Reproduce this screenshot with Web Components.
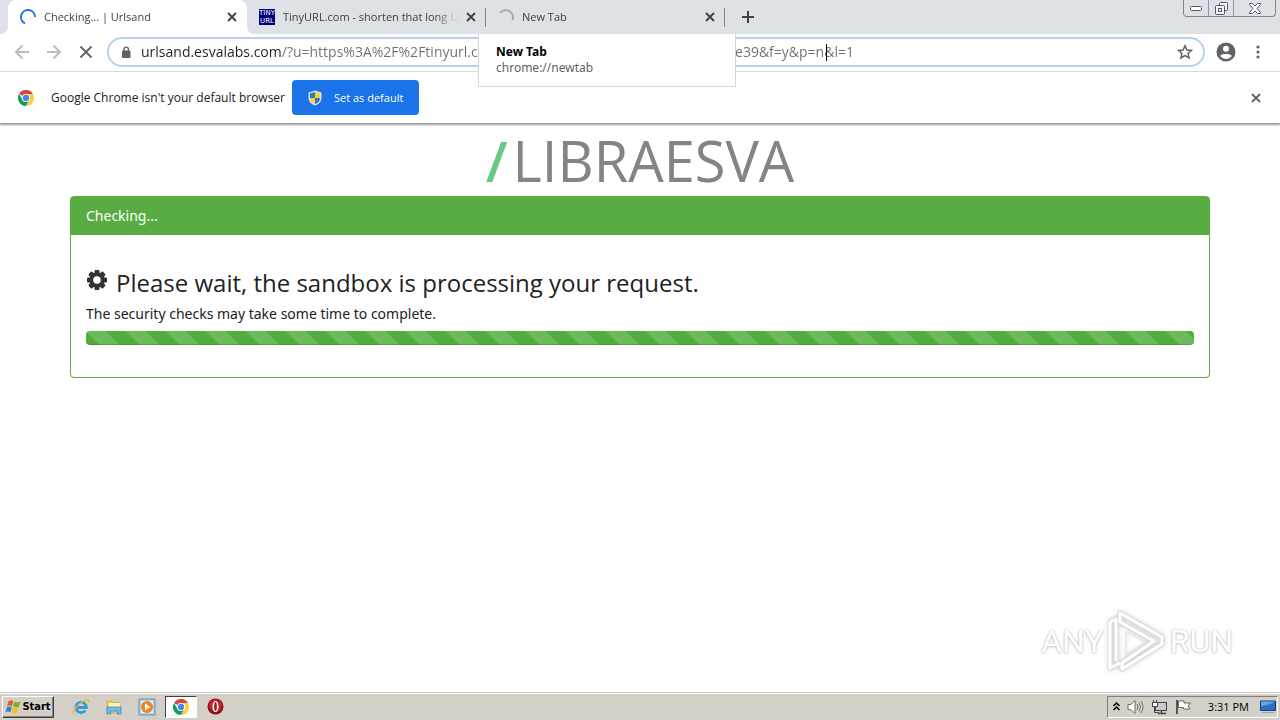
<!DOCTYPE html>
<html lang="en">
<head>
<meta charset="utf-8">
<title>Checking... | Urlsand</title>
<style>
html, body {
	height: 100%;
	margin: 0;
}
body {
	overflow: hidden;
	background: #fff;
}
</style>
</head>
<body>
<x-desktop></x-desktop>
<script>
const uiFont = '"Open Sans", "Noto Sans", sans-serif';
const icons = {
	spinner: '<svg width="16" height="16" viewBox="0 0 16 16"><path d="M5 14.300A7 7 0 1 1 15 8" fill="none" stroke="currentColor" stroke-width="2"/></svg>',
	arc: '<svg width="16" height="16" viewBox="0 0 16 16"><path d="M2.500 3.700A7 7 0 0 1 14.300 11" fill="none" stroke="currentColor" stroke-width="2"/></svg>',
	close: '<svg width="10" height="10" viewBox="0 0 10 10"><path d="M1 1L9 9M9 1L1 9" stroke="currentColor" stroke-width="1.800"/></svg>',
	stop: '<svg width="14" height="14" viewBox="0 0 14 14"><path d="M1.500 1.500L12.500 12.500M12.500 1.500L1.500 12.500" stroke="currentColor" stroke-width="1.800"/></svg>',
	plus: '<svg width="12" height="12" viewBox="0 0 12 12"><path d="M6 0V12M0 6H12" stroke="currentColor" stroke-width="2"/></svg>',
	back: '<svg width="16" height="16" viewBox="0 0 16 16"><path d="M15 8H2M8.500 1.500L2 8L8.500 14.500" fill="none" stroke="currentColor" stroke-width="2"/></svg>',
	forward: '<svg width="16" height="16" viewBox="0 0 16 16"><path d="M1 8H14M7.500 1.500L14 8L7.500 14.500" fill="none" stroke="currentColor" stroke-width="2"/></svg>',
	lock: '<svg width="10" height="12" viewBox="0 0 10 12"><rect x="1" y="4.500" width="8.500" height="7.500" rx="1" fill="#5f6368"/><path d="M3 5V3.300a2.200 2.200 0 0 1 4.400 0V5" fill="none" stroke="#5f6368" stroke-width="1.400"/></svg>',
	star: '<svg width="16" height="16" viewBox="0 0 16 16"><path d="M8 1.800L9.900 6L14.500 6.400L11 9.500L12.100 14L8 11.600L3.900 14L5 9.500L1.500 6.400L6.100 6Z" fill="none" stroke="#5f6368" stroke-width="1.500"/></svg>',
	person: '<svg width="20" height="20" viewBox="0 0 20 20"><circle cx="10" cy="10" r="9.500" fill="#5f6368"/><circle cx="10" cy="6.800" r="3" fill="#fff"/><path d="M4.200 14C5.500 11.400 14.500 11.400 15.800 14C14.300 16 12.200 16.900 10 16.900S5.700 16 4.200 14Z" fill="#fff"/></svg>',
	dots: '<svg width="4" height="14" viewBox="0 0 4 14"><g fill="#5f6368"><circle cx="2" cy="2" r="1.600"/><circle cx="2" cy="7" r="1.600"/><circle cx="2" cy="12" r="1.600"/></g></svg>',
	chrome: '<svg width="16" height="16" viewBox="0 0 48 48"><path d="M3.200 12A24 24 0 0 1 44.800 12H24A12 12 0 0 0 13.600 18Z" fill="#db4437"/><path d="M3.200 12L13.600 30A12 12 0 0 0 24 36L34.400 30L24 48A24 24 0 0 1 3.200 12Z" fill="#0f9d58"/><path d="M44.800 12A24 24 0 0 1 24 48L34.400 30A12 12 0 0 0 34.400 18L24 12Z" fill="#ffcd40"/><circle cx="24" cy="24" r="12" fill="#fff"/><circle cx="24" cy="24" r="9.500" fill="#4285f4"/></svg>',
	shield: '<svg width="14" height="16" viewBox="0 0 14 16"><path d="M7 .500L13.500 2.500V8C13.500 12 10 14.500 7 15.500C4 14.500 .500 12 .500 8V2.500Z" fill="#d8dfe8"/><path d="M7 2V8H2V3.500Z" fill="#2b78c5"/><path d="M7 2L12 3.500V8H7Z" fill="#fbd03b"/><path d="M2 8H7V14C4 12.800 2 11 2 8Z" fill="#fbd03b"/><path d="M12 8H7V14C10 12.800 12 11 12 8Z" fill="#2b78c5"/></svg>',
	gear: '<svg width="22" height="22" viewBox="0 0 22 22"><g fill="#333"><rect x="8.500" y="1" width="5" height="20" rx="1"/><rect x="1" y="8.500" width="20" height="5" rx="1"/><g transform="rotate(45 11 11)"><rect x="8.500" y="1" width="5" height="20" rx="1"/><rect x="1" y="8.500" width="20" height="5" rx="1"/></g><circle cx="11" cy="11" r="7.500"/></g><circle cx="11" cy="11" r="3.800" fill="#fff"/></svg>',
	minimize: '<svg width="12" height="5" viewBox="0 0 12 5"><rect x=".500" y=".500" width="11" height="4" rx="1" fill="#fff" stroke="#50586a"/></svg>',
	restore: '<svg width="13" height="13" viewBox="0 0 13 13"><g fill="#f4f5f7" stroke="#50586a"><rect x="4.500" y=".500" width="8" height="8" rx="1"/><rect x=".500" y="3.500" width="9" height="9" rx="1"/><rect x="3.500" y="6.500" width="3" height="3"/></g></svg>',
	winclose: '<svg width="12" height="11" viewBox="0 0 12 11"><path d="M.500 .500H3.500L6 3.200L8.500 .500H11.500V1.500L8 5.500L11.500 9.500V10.500H8.500L6 7.800L3.500 10.500H.500V9.500L4 5.500L.500 1.500Z" fill="#fff" stroke="#50586a"/></svg>',
	windows: '<svg width="17" height="16" viewBox="0 0 17 16"><path d="M3.500 2C5.500 .800 7 1 8.300 2L7 7.200C5.500 6.300 4 6.400 2.200 7.200Z" fill="#ea5b23"/><path d="M9.200 2.500C11 3.600 13 3.600 15.500 2.400L14 7.700C12 8.700 9.800 8.600 8 7.600Z" fill="#79b52b"/><path d="M2 8.100C4 7.200 5.500 7.300 6.800 8.200L5.400 13.300C4 12.400 2.500 12.400 .600 13.200Z" fill="#2f80d8"/><path d="M7.700 8.600C9.500 9.600 11.700 9.600 13.800 8.600L12.300 13.800C10 14.900 8 14.600 6.300 13.700Z" fill="#f8bd20"/></svg>',
	ie: '<svg width="18" height="18" viewBox="0 0 18 18"><path d="M4.500 9.500H14.300A5.200 5.200 0 1 0 13.300 12.500" fill="none" stroke="#2f9adb" stroke-width="2.800"/><path d="M1.500 16C.500 13.500 5 7 10 4S17.500 1.500 16.500 4.500" fill="none" stroke="#efb82d" stroke-width="1.400"/></svg>',
	folder: '<svg width="18" height="18" viewBox="0 0 18 18"><path d="M2 3H7L8.500 4.500H15V15H2Z" fill="#edcc68" stroke="#c6a54a" stroke-width=".800"/><rect x="4" y="5" width="11" height="5" fill="#fff3b2"/><path d="M2 9H16V16H12.500V13H5.500V16H2Z" fill="#71bce5" stroke="#3c8bbb" stroke-width=".800"/></svg>',
	player: '<svg width="18" height="18" viewBox="0 0 18 18"><rect x="1" y="1" width="16" height="16" fill="#acd0ef" stroke="#5e91c0"/><rect x="3" y="3" width="12" height="12" fill="#e5f2fb"/><circle cx="9" cy="9" r="6" fill="#ee8618"/><path d="M7 5.500L12.500 9L7 12.500Z" fill="#fff"/></svg>',
	opera: '<svg width="17" height="17" viewBox="0 0 17 17"><circle cx="8.500" cy="8.500" r="8" fill="#8b1117"/><circle cx="8.500" cy="7.500" r="6.500" fill="#c5232b"/><ellipse cx="8.500" cy="8.500" rx="3" ry="5.500" fill="#fff"/><ellipse cx="8.500" cy="8.500" rx="1.400" ry="4.500" fill="#a51c22"/></svg>',
	chevrons: '<svg width="7" height="9" viewBox="0 0 7 9"><path d="M.500 4L3.500 1L6.500 4M.500 8L3.500 5L6.500 8" fill="none" stroke="#000" stroke-width="1.500"/></svg>',
	sound: '<svg width="17" height="16" viewBox="0 0 17 16"><path d="M1 5.500H4L8 1.500V14.500L4 10.500H1Z" fill="#fff" stroke="#6d6d6d"/><path d="M10 5Q12 8 10 11M12 3.500Q15 8 12 12.500M14 2Q18 8 14 14" fill="none" stroke="#777"/></svg>',
	network: '<svg width="17" height="16" viewBox="0 0 17 16"><rect x="4.500" y="3.500" width="11" height="8" fill="#c8cac9" stroke="#444"/><path d="M7 14.500H15M10.500 12V14" stroke="#444" stroke-width="1.500"/><path d="M3.500 7.500V13.500H8M2.500 1V4M5.500 1V4" fill="none" stroke="#444"/><rect x="1.500" y="3.500" width="5" height="4" fill="#fff" stroke="#444"/></svg>',
	flag: '<svg width="17" height="16" viewBox="0 0 17 16"><path d="M2 1V15" stroke="#555" stroke-width="2"/><path d="M3.500 2H9V4H15.500L13 7L15 10H8.500V8.500H3.500Z" fill="#fff" stroke="#666"/></svg>',
	desktop: '<svg width="16" height="14" viewBox="0 0 16 14"><path d="M.500 1H15.500V10.500H.500Z" fill="#2e6fc1" stroke="#173e7c"/><path d="M1 6Q8 6 15 1.500H1Z" fill="#66a6e5"/><path d="M2 12.500H14" stroke="#8ba6c9"/></svg>',
	play: '<svg width="58" height="62" viewBox="0 0 58 62"><g fill="none" stroke-linejoin="round"><path d="M8 51V9L2 12V58L12 53M12 3L54 27V34L14 59V53L46 31L12 12Z" stroke="#dcdcdc" stroke-width="5"/><path d="M8 51V9L2 12V58L12 53M12 3L54 27V34L14 59V53L46 31L12 12Z" stroke="#fff" stroke-width="3"/><path d="M18 22V45L38 32Z" stroke="#e3e3e3" stroke-width="1"/></g></svg>',
};
const buttonReset = `
button {
	display: flex;
	align-items: center;
	justify-content: center;
	margin: 0;
	padding: 0;
	border: none;
	background: none;
	color: inherit;
	font: inherit;
}
svg {
	display: block;
}
`;

/**
 * Registers an element whose shadow root is cloned from the given markup.
 * @param {string} name
 * @param {string} html
 */
function define(name, html) {
	const template = document.createElement('template');
	template.innerHTML = html;
	customElements.define(name, class extends HTMLElement {
		constructor() {
			super();
			this.attachShadow({ mode: 'open' });
			this.shadowRoot.appendChild(template.content.cloneNode(true));
		}
	});
}

define('browser-tab', `
<style>
${buttonReset}
:host {
	position: relative;
	display: flex;
	align-items: center;
	flex: 0 1 239px;
	min-width: 0;
	box-sizing: border-box;
	gap: 8px;
	padding: 0 10px 0 12px;
	color: #3c4043;
}
:host([active]) {
	background: #fff;
	border-radius: 8px 8px 0 0;
}
:host([active])::before,
:host([active])::after {
	content: '';
	position: absolute;
	bottom: 0;
	width: 8px;
	height: 8px;
}
:host([active])::before {
	right: 100%;
	background: radial-gradient(circle at 0 0, transparent 8px, #fff 8px);
}
:host([active])::after {
	left: 100%;
	background: radial-gradient(circle at 100% 0, transparent 8px, #fff 8px);
}
:host([divided])::after {
	content: '';
	position: absolute;
	right: 0;
	top: 8px;
	width: 1px;
	height: 19px;
	background: #80868b;
}
.title {
	flex: 1;
	overflow: hidden;
	white-space: nowrap;
	-webkit-mask-image: linear-gradient(90deg, #000 calc(100% - 24px), transparent);
	mask-image: linear-gradient(90deg, #000 calc(100% - 24px), transparent);
}
</style>
<slot name="icon"></slot>
<span class="title"><slot></slot></span>
<button aria-label="Close tab">${icons.close}</button>
<slot name="card"></slot>
`);

define('hover-card', `
<style>
:host {
	position: absolute;
	top: 34px;
	left: -8px;
	z-index: 8;
	box-sizing: border-box;
	width: 258px;
	padding: 10px 17px;
	border: 1px solid #d5d7da;
	border-top: none;
	background: #fff;
	color: #5f6368;
	font: 12px/16px "Noto Sans", sans-serif;
}
b {
	display: block;
	color: #000;
}
</style>
<b><slot name="title"></slot></b>
<slot></slot>
`);

define('window-controls', `
<style>
${buttonReset}
:host {
	display: flex;
	align-self: flex-start;
	margin: 0 4px 0 auto;
	border: 1px solid #80868f;
	border-top: none;
	border-radius: 0 0 4px 4px;
}
button {
	width: 25px;
	height: 16px;
	border-right: 1px solid #9298a1;
}
button:last-child {
	width: 41px;
	border: none;
}
</style>
<button aria-label="Minimize">${icons.minimize}</button>
<button aria-label="Restore">${icons.restore}</button>
<button aria-label="Close">${icons.winclose}</button>
`);

define('tab-strip', `
<style>
${buttonReset}
:host {
	display: flex;
	height: 34px;
	padding-left: 8px;
	background: #dee1e6;
	font-size: 11px;
	line-height: 16px;
}
.blue {
	color: #2a6fdb;
}
.gray {
	color: #a5a8ac;
}
.tiny {
	width: 16px;
	background: #00007f;
	color: #fff;
	font: 7px/8px "DejaVu Sans", sans-serif;
	text-align: center;
}
.add {
	width: 46px;
	color: #3c4043;
}
</style>
<browser-tab active><span slot="icon" class="blue">${icons.spinner}</span>Checking... | Urlsand</browser-tab>
<browser-tab divided><span slot="icon" class="tiny">TINY URL</span>TinyURL.com - shorten that long URL</browser-tab>
<browser-tab divided>
	<span slot="icon" class="gray">${icons.arc}</span>New Tab
	<hover-card slot="card"><span slot="title">New Tab</span>chrome://newtab</hover-card>
</browser-tab>
<button class="add" aria-label="New tab">${icons.plus}</button>
<window-controls></window-controls>
`);

define('address-bar', `
<style>
${buttonReset}
:host {
	position: relative;
	display: flex;
	align-items: center;
	flex: 1;
	box-sizing: border-box;
	height: 30px;
	padding: 0 10px 0 12px;
	border: 2px solid #b9cfee;
	border-radius: 15px;
	--host-width: 140px;
}
input {
	flex: 1;
	min-width: 0;
	margin: 0 10px;
	padding: 0;
	border: none;
	outline: none;
	font: 14px/20px "Open Sans", sans-serif;
	color: transparent;
	background: linear-gradient(90deg, #202124 var(--host-width), #6b6f74 var(--host-width));
	-webkit-background-clip: text;
	background-clip: text;
}
.caret {
	position: absolute;
	left: 717px;
	width: 1px;
	height: 17px;
	background: #000;
}
</style>
${icons.lock}
<input aria-label="Address" spellcheck="false" value="urlsand.esvalabs.com/?u=https%3A%2F%2Ftinyurl.com%2Fy4&amp;e=52a84c1d&amp;h=1b6da7f02be39&amp;f=y&amp;p=n&amp;l=1">
<span class="caret"></span>
<button aria-label="Bookmark this page">${icons.star}</button>
`);

define('tool-bar', `
<style>
${buttonReset}
:host {
	display: flex;
	align-items: center;
	height: 36px;
	padding: 0 6px 1px;
	border-bottom: 1px solid #dcdee1;
	color: #5f6368;
}
button {
	width: 32px;
	height: 28px;
}
button:disabled {
	color: #babcbe;
}
address-bar {
	margin: 0 5px;
}
</style>
<button disabled aria-label="Back">${icons.back}</button>
<button disabled aria-label="Forward">${icons.forward}</button>
<button aria-label="Stop">${icons.stop}</button>
<address-bar></address-bar>
<button aria-label="Profile">${icons.person}</button>
<button aria-label="Menu">${icons.dots}</button>
`);

define('info-bar', `
<style>
${buttonReset}
:host {
	display: flex;
	align-items: center;
	height: 51px;
	padding: 0 19px 0 18px;
	border-bottom: 1px solid #a0a0a0;
	box-shadow: 0 1px 2px #999;
	z-index: 1;
	color: #202124;
	font-size: 12px;
	line-height: 16px;
}
.text {
	margin: 0 7px 0 17px;
}
.default {
	gap: 12px;
	height: 35px;
	padding: 0 16px;
	border-radius: 4px;
	background: #1a73e8;
	color: #fff;
	font-size: 11px;
}
.close {
	margin-left: auto;
	color: #5f6368;
}
</style>
${icons.chrome}
<span class="text">Google Chrome isn't your default browser</span>
<button class="default">${icons.shield}Set as default</button>
<button class="close" aria-label="Close">${icons.close}</button>
`);

define('brand-logo', `
<style>
:host {
	display: flex;
	justify-content: center;
	align-items: baseline;
	height: 72px;
	color: #848484;
	font: 56px/72px "Open Sans", sans-serif;
}
.slash {
	margin-right: 5px;
	color: #69c981;
	font-weight: 600;
}
</style>
<span class="slash">/</span><span>LIBRAESVA</span>
`);

define('status-panel', `
<style>
:host {
	display: block;
	box-sizing: border-box;
	width: calc(100% - 140px);
	margin: 0 auto;
	border: 1px solid #58ac43;
	border-radius: 4px;
}
header {
	padding: 9px 15px;
	background: #58ac43;
	color: #fff;
	line-height: 20px;
}
section {
	padding: 32px 15px;
}
</style>
<header><slot name="title"></slot></header>
<section><slot></slot></section>
`);

define('progress-stripes', `
<style>
:host {
	display: block;
	height: 14px;
	border-radius: 4px;
	background: #52ae3c linear-gradient(45deg, rgba(255, 255, 255, .15) 25%, transparent 25%, transparent 50%, rgba(255, 255, 255, .15) 50%, rgba(255, 255, 255, .15) 75%, transparent 75%) 0 0 / 40px 40px;
	box-shadow: inset 0 -1px 0 rgba(0, 0, 0, .15);
}
</style>
`);

define('water-mark', `
<style>
:host {
	position: absolute;
	right: 47px;
	bottom: 20px;
	display: flex;
	align-items: center;
	gap: 4px;
	color: #fff;
	font: 32px/62px Roboto, sans-serif;
	text-shadow: 0 0 2px #bbb, 0 1px 3px #ccc;
}
svg {
	display: block;
	filter: drop-shadow(0 0 2px #ccc);
}
</style>
<span>ANY</span>${icons.play}<span>RUN</span>
`);

define('web-page', `
<style>
:host {
	position: relative;
	display: block;
	flex: 1;
	min-height: 0;
	color: #222;
	font: 14px/20px "Noto Sans", sans-serif;
}
h1 {
	display: flex;
	gap: 8px;
	margin: 0 0 5px;
	font: 24px/32px "Open Sans", sans-serif;
}
p {
	margin: 0 0 7px;
}
svg {
	display: block;
	margin-top: 2px;
}
</style>
<brand-logo></brand-logo>
<status-panel>
	<span slot="title">Checking...</span>
	<h1>${icons.gear}Please wait, the sandbox is processing your request.</h1>
	<p>The security checks may take some time to complete.</p>
	<progress-stripes role="progressbar" aria-label="Security checks"></progress-stripes>
</status-panel>
<water-mark></water-mark>
`);

define('task-bar', `
<style>
${buttonReset}
:host {
	display: flex;
	align-items: center;
	box-sizing: border-box;
	height: 28px;
	padding: 0 2px;
	border-top: 1px solid #c6c3bc;
	box-shadow: inset 0 1px 0 #fff;
	background: #d4d0c8;
	color: #000;
	font-size: 11px;
}
button {
	width: 33px;
	height: 22px;
}
.start {
	width: 52px;
	margin-right: 10px;
	border: 1px solid;
	border-color: #fff #404040 #404040 #fff;
	box-shadow: inset -1px -1px 0 #808080;
	font: bold 11px "DejaVu Sans Condensed", "DejaVu Sans", sans-serif;
}
.pressed {
	width: 32px;
	margin: 0 2px;
	box-sizing: border-box;
	border: 1px solid;
	border-color: #404040 #fff #fff #404040;
	background: #fff;
}
.tray {
	display: flex;
	align-items: center;
	gap: 7px;
	box-sizing: border-box;
	height: 22px;
	margin-left: auto;
	padding: 0 1px 0 5px;
	border: 1px solid;
	border-color: #808080 #fff #fff #808080;
}
time {
	margin: 0 4px 0 9px;
}
</style>
<button class="start">${icons.windows}Start</button>
<button aria-label="Internet Explorer">${icons.ie}</button>
<button aria-label="Windows Explorer">${icons.folder}</button>
<button aria-label="Media Player">${icons.player}</button>
<button class="pressed" aria-label="Google Chrome">${icons.chrome}</button>
<button aria-label="Opera">${icons.opera}</button>
<div class="tray">
	${icons.chevrons}${icons.sound}${icons.network}${icons.flag}
	<time>3:31 PM</time>
	${icons.desktop}
</div>
`);

define('x-desktop', `
<style>
:host {
	display: flex;
	flex-direction: column;
	height: 100%;
	font-family: ${uiFont};
}
</style>
<tab-strip></tab-strip>
<tool-bar></tool-bar>
<info-bar></info-bar>
<web-page></web-page>
<task-bar></task-bar>
`);
</script>
</body>
</html>
